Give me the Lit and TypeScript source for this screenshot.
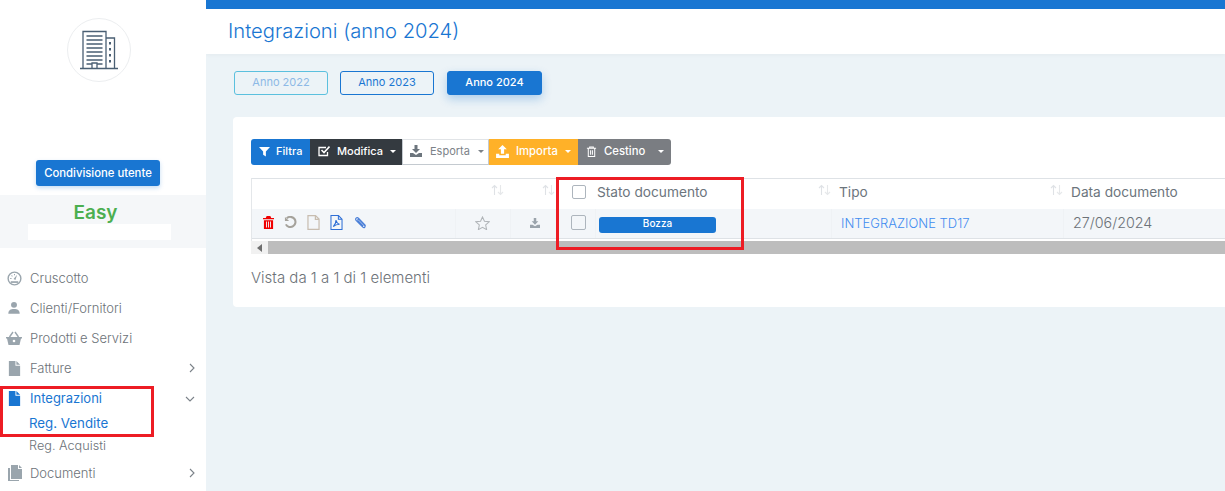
import { LitElement, css, html, svg } from 'lit';
import { customElement } from 'lit/decorators.js';

const fileIcon = svg`<path d="M2 0h7v5h5v11H2z"/><path d="M10 0l4 4h-4z"/>`;

const menu = [
  { label: 'Cruscotto', icon: 'gauge' },
  { label: 'Clienti/Fornitori', icon: 'user' },
  { label: 'Prodotti e Servizi', icon: 'basket' },
  { label: 'Fatture', icon: 'file', arrow: 'right' },
  { label: 'Integrazioni', icon: 'file', arrow: 'down', active: true },
];

function menuIcon(name: string) {
  if (name === 'gauge')
    return html`<svg viewBox="0 0 16 16" width="15" height="15"><circle cx="8" cy="8" r="6.8" fill="none" stroke="currentColor" stroke-width="1.5"/><path d="M7 8.600L10.800 4 9 9.600z" fill="currentColor"/><path d="M3.400 8h1.400M4.800 4.800l1 1M8 3.200v1.400" stroke="currentColor" stroke-width="1.100"/><path d="M4 11.800h8" stroke="currentColor" stroke-width="1.800"/></svg>`;
  if (name === 'user')
    return html`<svg viewBox="0 0 16 16" width="14" height="14"><circle cx="8" cy="4.400" r="3.400" fill="currentColor"/><path d="M1.500 14.500c0-4 2.500-5.500 6.500-5.500s6.500 1.500 6.500 5.500z" fill="currentColor"/></svg>`;
  if (name === 'basket')
    return html`<svg viewBox="0 0 16 14" width="16" height="14" style="margin-left:-1px"><path d="M0 6h16v1.600h-1L13.500 14h-11L1 7.600H0z" fill="currentColor"/><path d="M3.500 6L7 1M12.500 6L9 1" stroke="currentColor" stroke-width="1.400" fill="none"/><circle cx="8" cy="10" r="1.300" fill="#fff"/></svg>`;
  return html`<svg viewBox="0 0 16 16" width="15" height="15" fill="currentColor">${fileIcon}</svg>`;
}

function sortIcon() {
  return html`<svg class="sort" viewBox="0 0 13 12" width="13" height="12"><path d="M3.500 11V1.500M1 4l2.500-2.500L6 4" fill="none" stroke="#dfe2e6" stroke-width="1.100"/><path d="M9.500 1v9.500M7 8l2.500 2.500L12 8" fill="none" stroke="#e6e8ea" stroke-width="1.100"/></svg>`;
}

function caret() {
  return html`<span class="caret"></span>`;
}

const chevronRight = html`<svg viewBox="0 0 10 10" width="10" height="10"><path d="M3 1l4 4-4 4" fill="none" stroke="#7b8289" stroke-width="1.100"/></svg>`;
const chevronDown = html`<svg class="down" viewBox="0 0 10 10" width="10" height="10"><path d="M1 3l4 4 4-4" fill="none" stroke="#7b8289" stroke-width="1.100"/></svg>`;

@customElement('app-root')
export class AppRoot extends LitElement {
  static styles = css`
    :host {
      display: block;
      width: 1225px;
      height: 491px;
      overflow: hidden;
      position: relative;
      font-family: 'Inter', 'Liberation Sans', sans-serif;
      color: #747a80;
      background: #ecf3f7;
    }
    .app {
      display: grid;
      grid-template-columns: 206px 1019px;
      height: 491px;
    }

    /* sidebar */
    .side {
      background: #fff;
      padding-top: 18px;
      overflow: hidden;
    }
    .logo {
      width: 62px;
      height: 62px;
      border: 1px solid #eceef0;
      border-radius: 50%;
      margin: 0 0 0 67px;
      display: flex;
      align-items: center;
      justify-content: center;
    }
    .share {
      display: block;
      margin: 78px 0 0 36px;
      width: 124px;
      height: 26px;
      padding: 0;
      border: 0;
      border-radius: 3px;
      background: #1976d2;
      color: #fff;
      font: 500 11.3px 'Inter', sans-serif;
      box-shadow: 0 2px 4px rgba(25, 118, 210, 0.25);
    }
    .plan {
      margin-top: 9px;
      height: 53px;
      background: #f5f7f9;
      padding-top: 7px;
      box-sizing: border-box;
    }
    .plan b {
      display: block;
      padding-right: 15px;
      text-align: center;
      color: #4caf50;
      font-size: 19px;
      font-weight: 600;
      line-height: 21px;
    }
    .plan i {
      display: block;
      margin: 1px 0 0 28px;
      width: 143px;
      height: 16px;
      background: #fff;
    }
    nav {
      padding-top: 15px;
    }
    .item {
      display: flex;
      align-items: center;
      height: 30px;
      padding: 0 9px 0 7px;
      font-size: 13px;
      font-weight: 300;
      color: #6c7278;
    }
    .item .ic {
      width: 23px;
      display: flex;
      color: #9aa5ad;
    }
    .item .t {
      flex: 1;
    }
    .item .down {
      margin-right: 2px;
      margin-top: 2px;
    }
    .item.active,
    .item.active .ic {
      color: #1976d2;
      font-weight: 400;
    }
    .sub {
      display: block;
      padding-left: 29px;
      font-size: 12.7px;
      font-weight: 300;
      height: 22px;
      line-height: 22px;
      color: #6c7278;
    }
    .sub.on {
      color: #1976d2;
      font-size: 13.3px;
      font-weight: 400;
      margin-top: -2px;
      height: 24px;
      line-height: 24px;
    }
    .item.last {
      margin-top: 1px;
    }

    /* main */
    .main {
      overflow: hidden;
    }
    .top {
      border-top: 9px solid #1976d2;
      height: 45px;
      background: #fff;
      padding-left: 22px;
      font-size: 20.2px;
      font-weight: 300;
      line-height: 44px;
      color: #1976d2;
      box-shadow: 0 1px 4px rgba(0, 0, 0, 0.04);
    }
    .years {
      display: flex;
      gap: 12px;
      margin: 17px 0 0 28px;
    }
    .year {
      width: 94px;
      height: 24px;
      box-sizing: border-box;
      border: 1px solid #1976d2;
      border-radius: 3px;
      background: transparent;
      color: #1976d2;
      font: 400 11px 'Inter', sans-serif;
      padding: 0 0 2px;
    }
    .year.old {
      border-color: #5bc0de;
      color: #8db9e6;
    }
    .year.cur {
      width: 95px;
      margin-left: 1px;
      background: #1976d2;
      color: #fff;
      font-weight: 500;
      box-shadow: 0 4px 10px rgba(25, 118, 210, 0.3);
    }
    .card {
      margin: 22px 0 0 27px;
      width: 1100px;
      height: 190px;
      background: #fff;
      border-radius: 4px;
      padding: 22px 0 0 18px;
      box-sizing: border-box;
    }
    .tools {
      display: flex;
      width: 420px;
      height: 26px;
      font-size: 11px;
      font-weight: 500;
      color: #fff;
      white-space: nowrap;
    }
    .tool {
      display: flex;
      align-items: center;
      box-sizing: border-box;
      height: 26px;
      gap: 7px;
      padding-bottom: 2px;
    }
    .tool svg {
      flex-shrink: 0;
    }
    .tool.filter {
      width: 59px;
      gap: 6px;
      background: #1976d2;
      border-radius: 3px 0 0 3px;
      padding-left: 8px;
    }
    .tool.edit {
      width: 92px;
      background: #343a40;
      padding-left: 8px;
    }
    .tool.export {
      width: 87px;
      background: #fff;
      color: #7c8288;
      font-weight: 400;
      border: 1px solid #c4cad0;
      border-top-color: #e1e4e7;
      padding-left: 7px;
      gap: 8px;
    }
    .tool.import {
      width: 89px;
      background: #ffb128;
      padding-left: 6px;
      gap: 6px;
      font-size: 11.3px;
    }
    .tool.trash {
      width: 93px;
      background: #7a7d82;
      border-radius: 0 3px 3px 0;
      padding-left: 8px;
      font-size: 11.3px;
    }
    .caret {
      width: 0;
      height: 0;
      border: 3px solid transparent;
      border-top-color: currentColor;
      border-bottom: 0;
      margin-left: auto;
      margin-right: 7px;
    }
    .table {
      margin-top: 13px;
      width: 1050px;
      border-top: 1px solid #dee2e6;
      border-left: 1px solid #e4e7ea;
    }
    .row {
      display: grid;
      grid-template-columns: 204px 55px 46px 39px 236px 232px 1fr;
    }
    .head {
      height: 30px;
    }
    .head > div {
      display: flex;
      align-items: center;
      font-size: 13.7px;
      font-weight: 400;
      color: #6c757d;
      padding-bottom: 4px;
      box-sizing: border-box;
    }
    .head .sort {
      margin-left: auto;
      margin-right: 1px;
      margin-bottom: 5px;
    }
    .head .s1 .sort {
      margin-right: 7px;
    }
    .head .s2 .sort {
      margin-right: 2px;
    }
    .head .c-stato {
      padding-left: 1px;
    }
    .head .c-tipo,
    .head .c-data {
      padding-left: 7px;
    }
    .body {
      height: 29px;
      background: #f3f6f9;
      border-bottom: 1px solid #dee2e6;
    }
    .body > div {
      display: flex;
      align-items: center;
      font-size: 14.3px;
      font-weight: 300;
      border-right: 1px solid #eff2f5;
      padding-bottom: 2px;
      box-sizing: border-box;
    }
    .acts {
      padding-left: 11px;
      gap: 10px;
    }
    .box {
      width: 12px;
      height: 12px;
      border: 1px solid #adb5bd;
      border-radius: 2px;
      background: #fff;
      display: block;
      margin-left: 15px;
    }
    .body .box {
      background: #f3f6f9;
      margin-left: 14px;
      width: 13px;
      height: 13px;
    }
    .badge {
      width: 117px;
      height: 16px;
      background: #1976d2;
      border-radius: 3px;
      color: #fff;
      font-size: 10px;
      font-weight: 500;
      line-height: 13px;
      text-align: center;
      margin: 5px 0 0 3px;
    }
    .body .link {
      color: #3f8cf0;
      font-size: 13px;
      padding-left: 9px;
    }
    .body .date {
      padding-left: 9px;
      color: #6c7278;
    }
    .body .star {
      justify-content: center;
      padding-right: 2px;
    }
    .body .dl {
      justify-content: center;
      padding-left: 3px;
    }
    .scroll {
      display: flex;
      margin: 2px 0 0 -1px;
      height: 13px;
      background: #f1f1f1;
    }
    .scroll .arrow {
      width: 17px;
      display: flex;
      align-items: center;
      justify-content: center;
    }
    .scroll .thumb {
      flex: 1;
      background: #bdbdbd;
    }
    .count {
      margin-top: 14px;
      font-size: 15px;
      font-weight: 300;
      color: #6c7278;
      line-height: 20px;
    }
    .mark {
      position: absolute;
      border: 3px solid #ed1c24;
      box-sizing: border-box;
      pointer-events: none;
    }
    .mark.a {
      left: 0;
      top: 386px;
      width: 154px;
      height: 51px;
    }
    .mark.b {
      left: 556px;
      top: 177px;
      width: 188px;
      height: 73px;
    }
  `;

  render() {
    return html`
      <div class="app">
        <aside class="side">
          <div class="logo">
            <svg viewBox="0 0 40 40" width="40" height="40" fill="none" stroke="#4a5f73" stroke-width="1.300">
              <path d="M1 38.500h38M4 38V1.500h23V38M27 8h8.500v30"/>
              <path d="M7.500 6h16M7.500 10h16M7.500 14h16M7.500 18h16M7.500 22h16M7.500 26h16M7.500 30h16" stroke-width="1.500"/>
              <path d="M7.500 34h6M18 34h5.500M13 38v-5h5v5"/>
              <path d="M31 12v2.500M31 18v2.500M31 24v2.500M31 30v2.500" stroke-width="2"/>
            </svg>
          </div>
          <button class="share">Condivisione utente</button>
          <div class="plan"><b>Easy</b><i></i></div>
          <nav>
            ${menu.map(
              (m) => html`<div class="item ${m.active ? 'active' : ''}">
                <span class="ic">${menuIcon(m.icon)}</span><span class="t">${m.label}</span>
                ${m.arrow === 'right' ? chevronRight : m.arrow === 'down' ? chevronDown : ''}
              </div>`,
            )}
            <span class="sub on">Reg. Vendite</span>
            <span class="sub">Reg. Acquisti</span>
            <div class="item last">
              <span class="ic"><svg viewBox="0 0 16 16" width="16" height="16" fill="currentColor"><path d="M4 0h7v4h4v10H4z"/><path d="M12 0l3 3h-3z"/><path d="M1 3h2v12h9v1H1z"/></svg></span>
              <span class="t">Documenti</span>
              ${chevronRight}
            </div>
          </nav>
        </aside>

        <main class="main">
          <div class="top">Integrazioni (anno 2024)</div>
          <div class="years">
            <button class="year old">Anno 2022</button>
            <button class="year">Anno 2023</button>
            <button class="year cur">Anno 2024</button>
          </div>
          <section class="card">
            <div class="tools">
              <div class="tool filter">
                <svg viewBox="0 0 12 12" width="11" height="11" fill="#fff"><path d="M0 1h12L7.500 6v5.500l-3-2V6z"/></svg>Filtra
              </div>
              <div class="tool edit">
                <svg viewBox="0 0 12 12" width="12" height="12" fill="none" stroke="#fff" stroke-width="1.300"><path d="M9.500 7v3.500h-8.500V2.500h7"/><path d="M3.500 5l2.500 2.500L11.500 1.500" stroke-width="1.600"/></svg>Modifica${caret()}
              </div>
              <div class="tool export">
                <svg viewBox="0 0 12 12" width="12" height="12" fill="#6c757d"><path d="M4.500 0h3v4H10L6 8 2 4h2.500z"/><path d="M0 8h3l3 2 3-2h3v4H0z"/></svg>Esporta${caret()}
              </div>
              <div class="tool import">
                <svg viewBox="0 0 14 12" width="15" height="13" fill="#fff"><path d="M5.500 8h3V4H11L7 0 3 4h2.500z"/><path d="M1 8h3v1.500h6V8h3v4H1z"/></svg>Importa${caret()}
              </div>
              <div class="tool trash">
                <svg viewBox="0 0 12 12" width="11" height="11" fill="none" stroke="#fff" stroke-width="1.100"><path d="M1 2.500h10M4 2.500V1h4v1.500M2.500 2.500v9h7v-9M5 4.500v5M7 4.500v5"/></svg>Cestino${caret()}
              </div>
            </div>

            <div class="table">
              <div class="row head">
                <div></div>
                <div class="s1">${sortIcon()}</div>
                <div class="s2">${sortIcon()}</div>
                <div><span class="box"></span></div>
                <div class="c-stato">Stato documento${sortIcon()}</div>
                <div class="c-tipo">Tipo${sortIcon()}</div>
                <div class="c-data">Data documento</div>
              </div>
              <div class="row body">
                <div class="acts">
                  <svg viewBox="0 0 12 14" width="11" height="13" fill="#f00000"><path d="M4 0h4l1 2h3v1.500H0V2h3zM1 4.500h10V14H1zM3.300 6v6.500h1V6zM5.500 6v6.500h1V6zM7.700 6v6.500h1V6z" fill-rule="evenodd"/></svg>
                  <svg viewBox="0 0 14 14" width="13" height="13" fill="none" stroke="#a5a29b" stroke-width="2.200"><path d="M3 2.500A5.500 5.500 0 1 1 2 9"/><path d="M1 1v4.500h4.500z" fill="#a5a29b" stroke="none"/></svg>
                  <svg viewBox="0 0 13 16" width="13" height="15" fill="none" stroke="#c8bdb0" stroke-width="1.300"><path d="M.6.600h8l3.800 3.800v11H.6zM8.500.600v4h4"/></svg>
                  <svg viewBox="0 0 13 16" width="13" height="15" fill="none" stroke="#2f6fd6" stroke-width="1.100"><path d="M.6.600h8l3.800 3.800v11H.6zM8.500.600v4h4"/><path d="M3 12.500c2-2 3-5 2.800-7 1 3 2.500 4 4 4.300-2.500 0-5 1-6.800 2.700z"/></svg>
                  <svg viewBox="0 0 14 14" width="13" height="13" fill="none" stroke="#4a7fd8" stroke-width="1.300" style="margin-left:1px"><path d="M12.500 10.500L5 2.500C3 .5.500 3 2.500 5l7 7c1.500 1.300 3.300-.4 2-2l-6-6.200C4.700 3 3.500 4 4.300 5L10 11"/></svg>
                </div>
                <div class="star">
                  <svg viewBox="0 0 16 15" width="15" height="14" fill="none" stroke="#b0b4b8" stroke-width="1.100"><path d="M8 1l2.100 4.600 5 .6-3.700 3.400 1 5L8 12.100 3.600 14.600l1-5L.9 6.200l5-.6z"/></svg>
                </div>
                <div class="dl">
                  <svg viewBox="0 0 12 12" width="10" height="10" fill="#9aa3ab"><path d="M4.500 0h3v4H10L6 8 2 4h2.500z"/><path d="M0 8h3l3 2 3-2h3v4H0z"/></svg>
                </div>
                <div><span class="box"></span></div>
                <div><span class="badge">Bozza</span></div>
                <div class="link">INTEGRAZIONE TD17</div>
                <div class="date">27/06/2024</div>
              </div>
              <div class="scroll">
                <div class="arrow"><svg viewBox="0 0 5 8" width="5" height="8" fill="#6f6f6f"><path d="M5 0v8L0 4z"/></svg></div>
                <div class="thumb"></div>
              </div>
            </div>
            <div class="count">Vista da 1 a 1 di 1 elementi</div>
          </section>
        </main>
      </div>
      <div class="mark a"></div>
      <div class="mark b"></div>
    `;
  }
}

declare global {
  interface HTMLElementTagNameMap {
    'app-root': AppRoot;
  }
}
